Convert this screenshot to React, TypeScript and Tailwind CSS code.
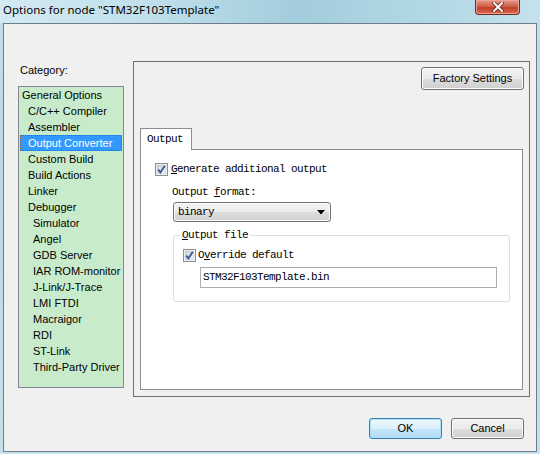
import React from "react";

const sans = { fontFamily: '"Liberation Sans", Arial, sans-serif' };

type Item = { label: string; level: number; selected?: boolean };

const categories: Item[] = [
	{ label: "General Options", level: 0 },
	{ label: "C/C++ Compiler", level: 1 },
	{ label: "Assembler", level: 1 },
	{ label: "Output Converter", level: 1, selected: true },
	{ label: "Custom Build", level: 1 },
	{ label: "Build Actions", level: 1 },
	{ label: "Linker", level: 1 },
	{ label: "Debugger", level: 1 },
	{ label: "Simulator", level: 2 },
	{ label: "Angel", level: 2 },
	{ label: "GDB Server", level: 2 },
	{ label: "IAR ROM-monitor", level: 2 },
	{ label: "J-Link/J-Trace", level: 2 },
	{ label: "LMI FTDI", level: 2 },
	{ label: "Macraigor", level: 2 },
	{ label: "RDI", level: 2 },
	{ label: "ST-Link", level: 2 },
	{ label: "Third-Party Driver", level: 2 },
];

const Checkbox = () => (
	<svg width="13" height="13" viewBox="0 0 13 13" className="shrink-0">
		<defs>
			<linearGradient id="cbg" x1="0" y1="0" x2="1" y2="1">
				<stop offset="0" stopColor="#cbcfd5" />
				<stop offset="1" stopColor="#f4f6f8" />
			</linearGradient>
		</defs>
		<rect x="0.5" y="0.5" width="12" height="12" fill="#fff" stroke="#8e8f8f" />
		<rect x="2" y="2" width="9" height="9" fill="url(#cbg)" stroke="#b8bcc2" strokeWidth="0.6" />
		<path d="M3.2 6.6 L5.4 9.4 L9.8 2.8" fill="none" stroke="#3b5697" strokeWidth="1.8" />
	</svg>
);

const Win7Button = ({ label, width, primary }: { label: string; width: string; primary?: boolean }) => (
	<button
		className={
			primary
				? `${width} h-[21px] rounded-[3px] border border-[#3c7fb1] bg-[linear-gradient(180deg,#edf7fd_0%,#dcf0fc_50%,#c3e6fb_51%,#b2dcf6_100%)] shadow-[inset_0_0_0_1px_#a8e4f8] text-[11px] text-black`
				: `${width} h-[21px] rounded-[3px] border border-[#707070] bg-[linear-gradient(180deg,#f2f2f2_0%,#ebebeb_50%,#dddddd_51%,#cfcfcf_100%)] shadow-[inset_0_0_0_1px_#fcfcfc] text-[11px] text-black`
		}
		style={sans}>
		{label}
	</button>
);

const App = () => {
	return (
		<div className="w-[540px] h-[454px] flex flex-col bg-[linear-gradient(180deg,#c2dfea_0%,#b9d9e6_40%,#c6e1ec_100%)] overflow-hidden">
			{/* title bar */}
			<div className="h-[23px] flex items-start justify-between bg-[linear-gradient(90deg,#d3eaf2_0%,#c2e1ec_25%,#a3cddc_55%,#b2d8e5_80%,#c4e2ec_100%)]">
				<div
					className="pl-[3px] mt-[2px] leading-[16px] text-[11.5px] text-black"
					style={{ fontFamily: '"Noto Sans", "Open Sans", sans-serif' }}>
					Options for node "STM32F103Template"
				</div>
				<div className="mr-[20px] w-[45px] h-[15px] rounded-b-[4px] border border-t-0 border-[#6e2a1e] bg-[linear-gradient(180deg,#e59a8a_0%,#d2604a_45%,#c2402a_55%,#d96a50_100%)] shadow-[inset_0_0_0_1px_#eaa597] flex items-center justify-center">
					<svg width="12" height="10" viewBox="0 0 12 10">
						<path d="M2 1 L10 9 M10 1 L2 9" stroke="#5a2018" strokeWidth="3.4" strokeLinecap="square" />
						<path d="M2 1 L10 9 M10 1 L2 9" stroke="#ffffff" strokeWidth="2" strokeLinecap="square" />
					</svg>
				</div>
			</div>

			{/* client area */}
			<div className="ml-[3px] w-[534px] h-[429px] border border-[#6f7d88] bg-[#f0f0f0] flex flex-col">
				<div className="mt-[37px] flex">
					{/* category */}
					<div className="ml-[14px] w-[106px] flex flex-col" style={sans}>
						<div className="mt-[2px] pl-[2px] leading-[14px] text-[11px] text-black">Category:</div>
						<div className="mt-[9px] h-[302px] border border-[#828790] bg-[#c8eccb]">
							{categories.map((item) => {
								if (item.selected) {
									return (
										<div
											key={item.label}
											className="mx-[1px] h-[16px] leading-[14px] border border-dotted border-[#8a5a20] bg-[#3399ff] text-white text-[11px] pl-[7px]">
											{item.label}
										</div>
									);
								}
								const pad = item.level === 0 ? "pl-[3px]" : item.level === 1 ? "pl-[9px]" : "pl-[14px]";
								return (
									<div key={item.label} className={`h-[16px] leading-[16px] text-[11px] text-black ${pad}`}>
										{item.label}
									</div>
								);
							})}
						</div>
					</div>

					{/* options panel */}
					<div className="ml-[9px] w-[397px] h-[336px] border border-[#6d6d6d] flex flex-col">
						<div className="pt-[5px] pr-[5px] flex justify-end">
							<Win7Button label="Factory Settings" width="w-[103px] !h-[23px]" />
						</div>
						<div className="mt-[38px] ml-[6px] w-[52px] h-[22px] -mb-px relative z-10 border border-b-0 border-[#898c95] bg-white">
							<div
								className="pl-[6px] pt-[4px] leading-[13px] text-[11px] tracking-[-0.6px] text-black"
								style={{ fontFamily: '"Liberation Mono", monospace' }}>
								Output
							</div>
						</div>
						<div
							className="mx-[6px] h-[241px] border border-[#898c95] bg-white text-[11px] tracking-[-0.6px] text-black flex flex-col"
							style={{ fontFamily: '"Liberation Mono", monospace' }}>
							<div className="mt-[13px] ml-[14px] flex items-center gap-[3px] h-[13px] leading-[13px]">
								<Checkbox />
								<span>
									<span className="underline">G</span>enerate additional output
								</span>
							</div>
							<div className="mt-[10px] ml-[31px] leading-[13px]">
								Output <span className="underline">f</span>ormat:
							</div>
							<div className="mt-[3px] ml-[32px] w-[158px] h-[20px] rounded-[3px] border border-[#707070] bg-[linear-gradient(180deg,#f2f2f2_0%,#ebebeb_50%,#dddddd_51%,#cfcfcf_100%)] shadow-[inset_0_0_0_1px_#fcfcfc] flex items-center justify-between pl-[4px] pr-[5px]">
								<span className="leading-[13px]">binary</span>
								<svg width="8" height="5" viewBox="0 0 8 5">
									<path d="M0 0 L8 0 L4 4.5 Z" fill="#000" />
								</svg>
							</div>
							<fieldset className="mt-[7px] ml-[32px] w-[337px] h-[73px] rounded-[3px] border border-[#d5dfe5] px-0 pt-0 pb-[14px]">
								<legend className="ml-[6px] px-[2px] leading-[13px]">
									<span className="underline">O</span>utput file
								</legend>
								<div className="mt-[7px] ml-[9px] flex items-center gap-[2px] h-[13px] leading-[13px]">
									<Checkbox />
									<span>
										O<span className="underline">v</span>erride default
									</span>
								</div>
								<div className="mt-[5px] ml-[26px] w-[297px] h-[21px] border border-[#abadb3] bg-white flex items-center pl-[2px] leading-[13px]">
									STM32F103Template.bin
								</div>
							</fieldset>
						</div>
					</div>
				</div>

				{/* dialog buttons */}
				<div className="mt-[21px] pr-[12px] flex justify-end gap-[9px]">
					<Win7Button label="OK" width="w-[73px]" primary />
					<Win7Button label="Cancel" width="w-[73px]" />
				</div>
			</div>
		</div>
	);
};

export default App;
